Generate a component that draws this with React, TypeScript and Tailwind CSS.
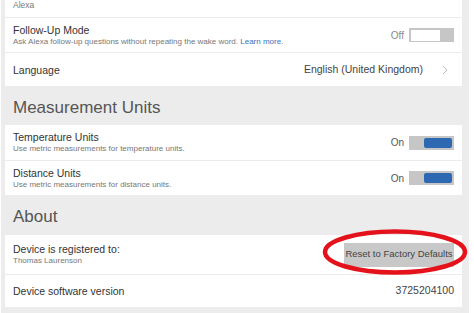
import React from "react";

function Divider() {
  return <div className="h-px bg-[#ebebeb]" />;
}

function Toggle({ on }: { on: boolean }) {
  if (on) {
    return (
      <div className="w-[45px] h-[14px] bg-[#c6c6c6] flex items-center justify-end pr-[2px]">
        <div className="w-[28px] h-[10px] rounded-[2px] bg-[#2d69b3]" />
      </div>
    );
  }
  return (
    <div className="w-[45px] h-[14px] bg-[#c6c6c6] flex items-center pl-[2px]">
      <div className="w-[29px] h-[11px] bg-white" />
    </div>
  );
}

function Row({
  title,
  sub,
  right,
  h,
}: {
  title: string;
  sub?: React.ReactNode;
  right?: React.ReactNode;
  h: string;
}) {
  return (
    <div className={`flex items-center justify-between pl-[8px] pr-[8px] ${h}`}>
      <div className="flex flex-col">
        <div className="text-[10.5px] leading-[12px] text-[#333]">{title}</div>
        {sub ? (
          <div className="text-[8px] leading-[11px] text-[#777]">{sub}</div>
        ) : null}
      </div>
      {right}
    </div>
  );
}

function Header({ text, h }: { text: string; h: string }) {
  return (
    <div className={`flex items-center pl-[8px] pt-[4px] ${h}`}>
      <div className="text-[17px] leading-[20px] text-[#555]">{text}</div>
    </div>
  );
}

export default function App() {
  return (
    <div className="w-[474px] h-[313px] bg-white overflow-hidden relative font-['Liberation_Sans',Arial,sans-serif]">
      <div className="ml-[1px] w-[468px] h-[313px] bg-[#ececec] pl-[4px] pr-[7px]">
        <div className="bg-white">
          <div className="h-[17px] overflow-hidden pl-[8px]">
            <div className="text-[8.5px] leading-[10px] text-[#777]">Alexa</div>
          </div>
          <Divider />
          <Row
            h="h-[34px]"
            title="Follow-Up Mode"
            sub={
              <>
                Ask Alexa follow-up questions without repeating the wake word.{" "}
                <span className="text-[#3a72b8]">Learn more.</span>
              </>
            }
            right={
              <div className="flex items-center gap-[5px]">
                <span className="text-[10px] text-[#888]">Off</span>
                <Toggle on={false} />
              </div>
            }
          />
          <Divider />
          <Row
            h="h-[33px]"
            title="Language"
            right={
              <div className="flex items-center">
                <span className="text-[10.5px] text-[#444]">English (United Kingdom)</span>
                <svg width="6" height="10" viewBox="0 0 6 10" className="ml-[19px] mr-[6px]">
                  <path d="M1 1 L5 5 L1 9" fill="none" stroke="#bdbdbd" strokeWidth="1" />
                </svg>
              </div>
            }
          />
        </div>
        <Header text="Measurement Units" h="h-[39px]" />
        <div className="bg-white">
          <Row
            h="h-[35px]"
            title="Temperature Units"
            sub="Use metric measurements for temperature units."
            right={
              <div className="flex items-center gap-[5px]">
                <span className="text-[10px] text-[#555]">On</span>
                <Toggle on={true} />
              </div>
            }
          />
          <Divider />
          <Row
            h="h-[34px]"
            title="Distance Units"
            sub="Use metric measurements for distance units."
            right={
              <div className="flex items-center gap-[5px]">
                <span className="text-[10px] text-[#555]">On</span>
                <Toggle on={true} />
              </div>
            }
          />
        </div>
        <Header text="About" h="h-[40px]" />
        <div className="bg-white">
          <Row
            h="h-[39px]"
            title="Device is registered to:"
            sub="Thomas Laurenson"
            right={
              <div className="w-[110px] h-[24px] bg-[#c8c8c8] flex items-center justify-center whitespace-nowrap text-[9.5px] text-[#444]">
                Reset to Factory Defaults
              </div>
            }
          />
          <Divider />
          <Row
            h="h-[32px]"
            title="Device software version"
            right={<span className="text-[10.5px] text-[#444]">3725204100</span>}
          />
        </div>
      </div>
      <svg
        className="absolute left-[321px] top-[228px]"
        width="150"
        height="48"
        viewBox="0 0 150 48"
      >
        <ellipse cx="74" cy="24" rx="70" ry="20.5" fill="none" stroke="#e3121b" strokeWidth="4.5" />
      </svg>
    </div>
  );
}
